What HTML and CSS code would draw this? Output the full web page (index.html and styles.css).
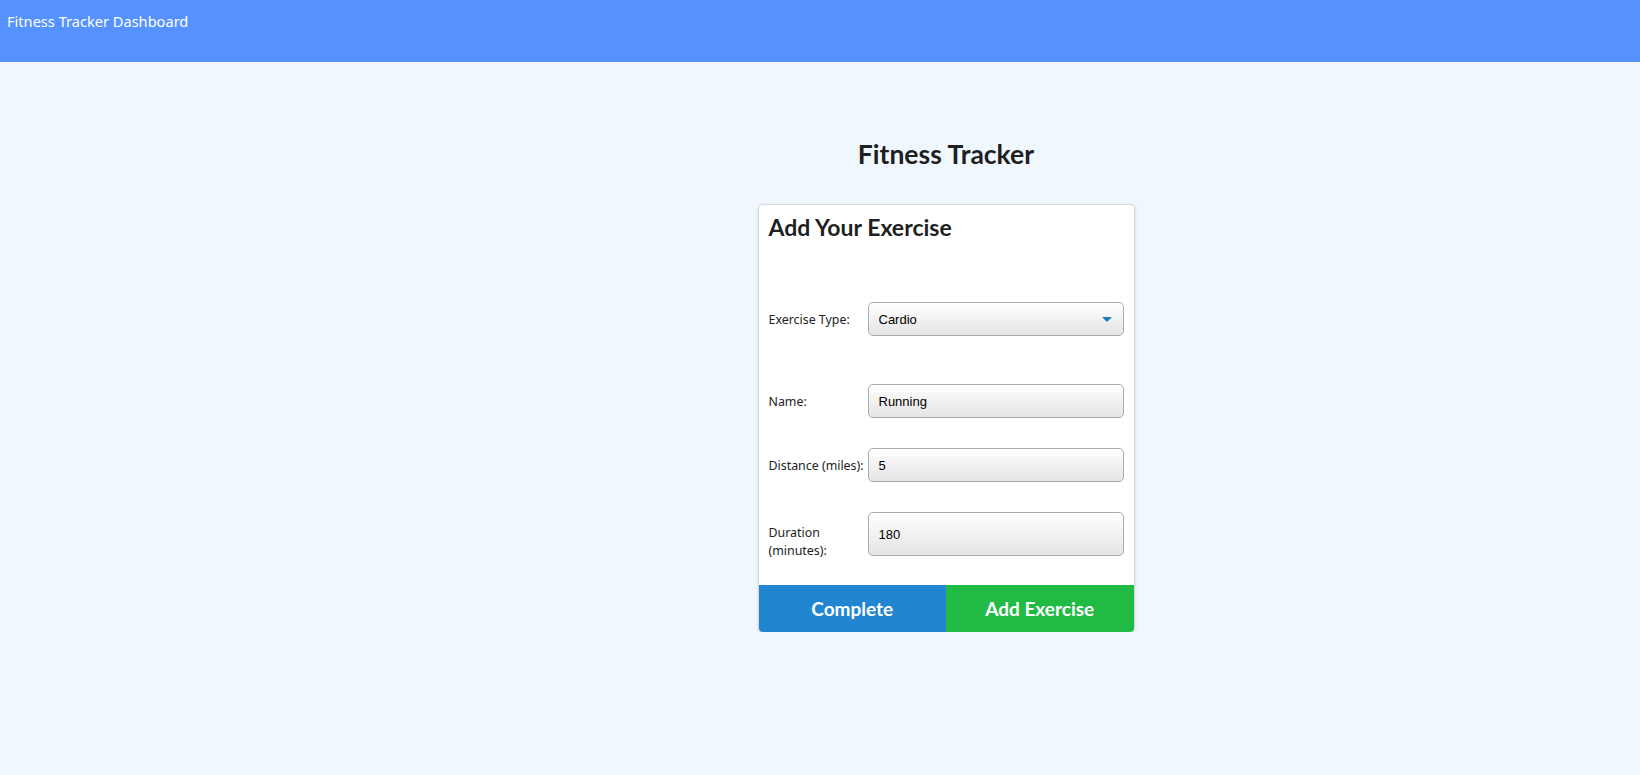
FILE: index.html
```html
<!DOCTYPE html>
<html lang="en">

<head>
    <meta charset="UTF-8" />
    <meta name="viewport" content="width=device-width, initial-scale=1.0" />
    <title>Fitness Tracker Dashboard</title>
    <link rel="stylesheet" href="styles.css">
</head>

<body>
    <div class="topbar">Fitness Tracker Dashboard</div>

    <div class="layout">
        <div class="side"></div>

        <div class="main">
            <h1 class="page-title">Fitness Tracker</h1>

            <div class="card">
                <div class="card-content">
                    <h2>Add Your Exercise</h2>

                    <form class="exercise-form">
                        <div class="row row-type">
                            <label for="type">Exercise Type:</label>
                            <div class="select-wrap">
                                <select id="type">
                                    <option>Cardio</option>
                                    <option>Resistance</option>
                                </select>
                            </div>
                        </div>

                        <div class="row">
                            <label for="name">Name:</label>
                            <input type="text" id="name" value="Running">
                        </div>

                        <div class="row">
                            <label for="distance">Distance (miles):</label>
                            <input type="number" id="distance" value="5">
                        </div>

                        <div class="row">
                            <label for="duration" class="low">Duration (minutes):</label>
                            <input type="number" id="duration" class="tall" value="180">
                        </div>
                    </form>
                </div>

                <div class="card-buttons">
                    <button class="btn btn-complete">Complete</button>
                    <button class="btn btn-add">Add Exercise</button>
                </div>
            </div>
        </div>
    </div>
</body>

</html>
```

FILE: styles.css
```css
body {
    margin: 0;
    font-family: Lato, sans-serif;
    background-color: #f0f7ff;
    color: #1f1f1f;
}

.topbar {
    background-color: #5592ff;
    color: white;
    height: 62px;
    box-sizing: border-box;
    padding: 11px 7px;
    font-family: 'Noto Sans', sans-serif;
    font-size: 14.6px;
}

.layout {
    display: flex;
}

.side {
    width: 252px;
    flex-shrink: 0;
}

.main {
    flex: 1;
    display: flex;
    flex-direction: column;
    align-items: center;
    padding-top: 76px;
}

.page-title {
    margin: 0 0 34px 0;
    font-size: 26.5px;
    font-weight: bold;
    line-height: 33px;
}

.card {
    width: 375px;
    background: #fff;
    border-radius: 4px;
    box-shadow: 0 1px 4px 0 #d0d2d6, 0 0 0 1px #d8d9db;
    overflow: hidden;
}

.card-content {
    padding: 7px 10px 29px 10px;
}

.card-content h2 {
    margin: 0;
    font-size: 23px;
    font-weight: bold;
    line-height: 30px;
}

.row {
    display: grid;
    grid-template-columns: 96px 1fr;
    column-gap: 3px;
    align-items: center;
    margin-top: 30px;
}

.row-type {
    margin-top: 60px;
    margin-bottom: 48px;
}

.row label {
    font-family: 'Noto Sans', sans-serif;
    font-size: 12.4px;
    line-height: 18px;
    color: #222;
    padding-top: 2px;
}

/* two-line label sits a bit lower than centre */
.row label.low {
    padding-top: 9px;
    margin-bottom: -7px;
}

.row input,
.row select {
    width: 100%;
    box-sizing: border-box;
    height: 34px;
    padding: 0 10px;
    border: 1px solid #aaa;
    border-radius: 5px;
    background: linear-gradient(180deg, #ffffff, #e4e4e4);
    font-family: 'Liberation Sans', Arial, sans-serif;
    font-size: 13px;
    color: #000;
    appearance: none;
    -moz-appearance: textfield;
    outline: none;
}

.row input::-webkit-outer-spin-button,
.row input::-webkit-inner-spin-button {
    -webkit-appearance: none;
    margin: 0;
}

.row input.tall {
    height: 44px;
}

.select-wrap {
    position: relative;
}

/* little blue arrow over the select */
.select-wrap::after {
    content: "";
    position: absolute;
    right: 12px;
    top: 15px;
    border-left: 5px solid transparent;
    border-right: 5px solid transparent;
    border-top: 5px solid #1b7cc0;
    pointer-events: none;
}

.card-buttons {
    display: grid;
    grid-template-columns: 1fr 1fr;
}

.btn {
    height: 47px;
    border: none;
    color: white;
    font-family: Lato, sans-serif;
    font-size: 19px;
    font-weight: bold;
    cursor: pointer;
}

.btn-complete {
    background-color: #2185d0;
}

.btn-complete:hover {
    background-color: #1678c2;
}

.btn-add {
    background-color: #21ba45;
}

.btn-add:hover {
    background-color: #16ab39;
}
```
